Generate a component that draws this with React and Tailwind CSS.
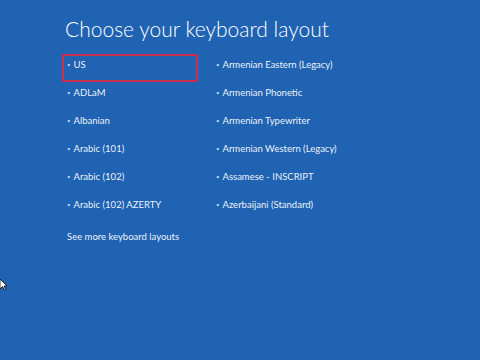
import React from "react";

const left = ["US", "ADLaM", "Albanian", "Arabic (101)", "Arabic (102)", "Arabic (102) AZERTY"];
const right = [
  "Armenian Eastern (Legacy)",
  "Armenian Phonetic",
  "Armenian Typewriter",
  "Armenian Western (Legacy)",
  "Assamese - INSCRIPT",
  "Azerbaijani (Standard)",
];

function Item({ label, selected }) {
  return (
    <div
      className={
        "h-[28px] flex items-start pt-[3px] pl-[3px] " +
        (selected ? "border-2 border-[#c8304c] w-[136px]" : "border-2 border-transparent")
      }
    >
      <span className="text-[6px] leading-[12px] mr-[3px] text-white/75">•</span>
      <span className="text-[9.5px] leading-[12px] text-white/95">{label}</span>
    </div>
  );
}

export default function App() {
  return (
    <div
      className="relative w-[480px] h-[360px] overflow-hidden bg-[#2063b3] text-white"
      style={{ fontFamily: 'Lato, "Open Sans", sans-serif' }}
    >
      <div className="pl-[62px] pt-[15px]">
        <h1 className="pl-[3px] text-[21px] font-light leading-[28px]">
          Choose your keyboard layout
        </h1>
        <div className="mt-[11px] flex">
          <div className="w-[149px] flex flex-col">
            {left.map((l, i) => (
              <Item key={l} label={l} selected={i === 0} />
            ))}
          </div>
          <div className="flex flex-col">
            {right.map((l) => (
              <Item key={l} label={l} />
            ))}
          </div>
        </div>
        <div className="mt-[9px] pl-[5px] text-[9.5px] leading-[12px] text-white/95">See more keyboard layouts</div>
      </div>
      <svg className="absolute left-[-1px] top-[278px]" width="8" height="13" viewBox="0 0 8 13">
        <path d="M1 1 L1 11 L3.5 8.5 L5 12 L6.5 11.3 L5 8 L8 8 Z" fill="white" stroke="black" strokeWidth="0.8" />
      </svg>
    </div>
  );
}
